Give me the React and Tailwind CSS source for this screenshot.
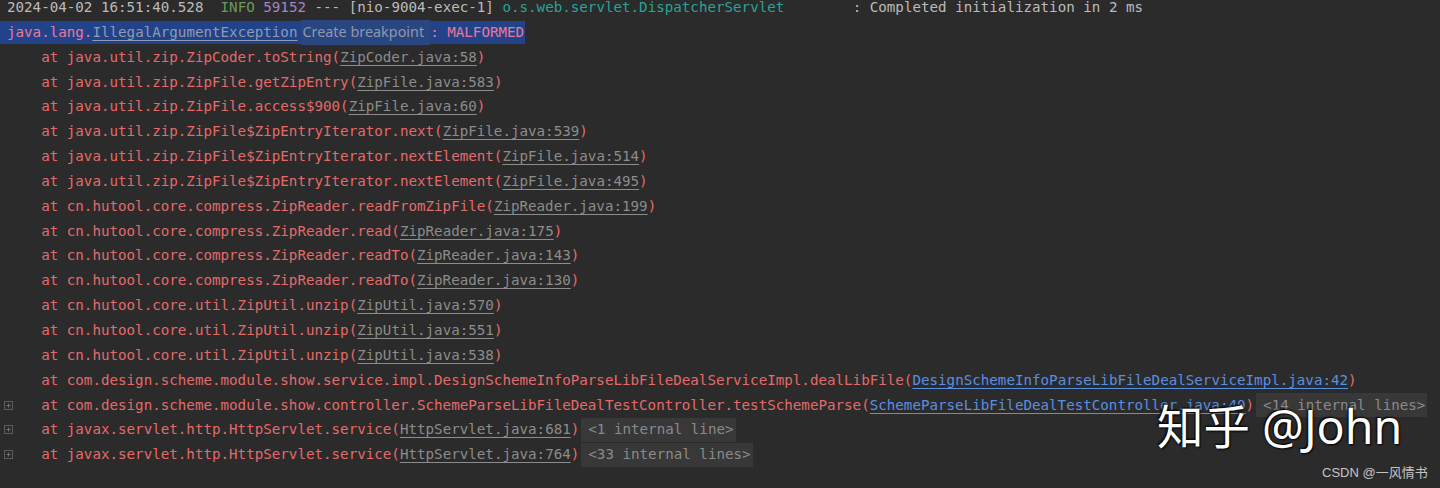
import React from "react";

const RED = "text-[#e46a6a]";

const frames = [
  ["java.util.zip.ZipCoder.toString", "ZipCoder.java:58"],
  ["java.util.zip.ZipFile.getZipEntry", "ZipFile.java:583"],
  ["java.util.zip.ZipFile.access$900", "ZipFile.java:60"],
  ["java.util.zip.ZipFile$ZipEntryIterator.next", "ZipFile.java:539"],
  ["java.util.zip.ZipFile$ZipEntryIterator.nextElement", "ZipFile.java:514"],
  ["java.util.zip.ZipFile$ZipEntryIterator.nextElement", "ZipFile.java:495"],
  ["cn.hutool.core.compress.ZipReader.readFromZipFile", "ZipReader.java:199"],
  ["cn.hutool.core.compress.ZipReader.read", "ZipReader.java:175"],
  ["cn.hutool.core.compress.ZipReader.readTo", "ZipReader.java:143"],
  ["cn.hutool.core.compress.ZipReader.readTo", "ZipReader.java:130"],
  ["cn.hutool.core.util.ZipUtil.unzip", "ZipUtil.java:570"],
  ["cn.hutool.core.util.ZipUtil.unzip", "ZipUtil.java:551"],
  ["cn.hutool.core.util.ZipUtil.unzip", "ZipUtil.java:538"],
  [
    "com.design.scheme.module.show.service.impl.DesignSchemeInfoParseLibFileDealServiceImpl.dealLibFile",
    "DesignSchemeInfoParseLibFileDealServiceImpl.java:42",
    true,
  ],
  [
    "com.design.scheme.module.show.controller.SchemeParseLibFileDealTestController.testSchemeParse",
    "SchemeParseLibFileDealTestController.java:40",
    true,
    "<14 internal lines>",
  ],
  ["javax.servlet.http.HttpServlet.service", "HttpServlet.java:681", false, "<1 internal line>"],
  ["javax.servlet.http.HttpServlet.service", "HttpServlet.java:764", false, "<33 internal lines>"],
];

function FoldIcon() {
  return (
    <svg
      className="absolute left-[-3px] top-[8px]"
      width="9"
      height="9"
      viewBox="0 0 9 9"
      fill="none"
    >
      <rect x="0.5" y="0.5" width="8" height="8" stroke="#5c5c5c" />
      <path d="M2.5 4.5h4M4.5 2.5v4" stroke="#6e6e6e" />
    </svg>
  );
}

export default function App() {
  return (
    <div className="relative w-[1440px] h-[488px] overflow-hidden bg-[#2b2b2b]">
      <div
        className="mt-[-5px] pl-[7px] text-[14.2px] leading-[24.85px] whitespace-pre"
        style={{ fontFamily: '"DejaVu Sans Mono", "Liberation Mono", monospace' }}
      >
        <div className="h-[24.85px] text-[#bbbbbb]">
          <span>2024-04-02 16:51:40.528  </span>
          <span className="text-[#6a9a58]">INFO</span>
          <span> </span>
          <span className="text-[#a783c8]">59152</span>
          <span> --- [nio-9004-exec-1] </span>
          <span className="text-[#2aa394]">o.s.web.servlet.DispatcherServlet</span>
          <span>        : Completed initialization in 2 ms</span>
        </div>
        <div className="h-[24.85px] flex items-center">
          <div className="ml-[-7px] pl-[7px] pr-[1px] h-[23px] flex items-center bg-[#22438a]">
            <span className="text-[#ea7898]">java.lang.</span>
            <span className="text-[#8f9bb0] underline underline-offset-[3px] decoration-[#8f9bb0]">
              IllegalArgumentException
            </span>
            <span
              className="ml-[4px] pl-[1px] pr-[6px] text-[#8c98ad] text-[14.4px] bg-[#2a4680]"
              style={{ fontFamily: '"Noto Sans", "Open Sans", sans-serif' }}
            >
              Create breakpoint
            </span>
            <span className="text-[#ea7898]">: MALFORMED</span>
          </div>
        </div>
        {frames.map(([method, file, blue, folded], i) => (
          <div key={i} className={`relative h-[24.85px] flex items-center ${RED}`}>
            {folded && <FoldIcon />}
            <span>{"    at " + method + "("}</span>
            <span
              className={
                blue
                  ? "text-[#5a8fe0] underline underline-offset-[3px] decoration-[#5a8fe0]"
                  : "text-[#8c8c8c] underline underline-offset-[3px] decoration-[#8c8c8c]"
              }
            >
              {file}
            </span>
            <span>)</span>
            {folded && (
              <span className="ml-[2px] pl-[7px] pr-[2px] h-[24px] flex items-center bg-[#383838] text-[#8a8a8a]">
                {folded}
              </span>
            )}
          </div>
        ))}
      </div>

      <div
        className="absolute left-[1157px] top-[398px] text-[46.5px] leading-[56px] text-white whitespace-pre"
        style={{
          fontFamily: '"Noto Sans", "Noto Sans CJK SC", sans-serif',
          textShadow: "1px 1px 2px #000, -1px -1px 2px #000",
        }}
      >
        知乎 @John
      </div>
      <div
        className="absolute left-[1322px] top-[464px] text-[13px] leading-[18px] text-[#c4c4c4] whitespace-pre"
        style={{ fontFamily: '"Liberation Sans", "Noto Sans CJK SC", sans-serif' }}
      >
        CSDN @一风情书
      </div>
    </div>
  );
}
